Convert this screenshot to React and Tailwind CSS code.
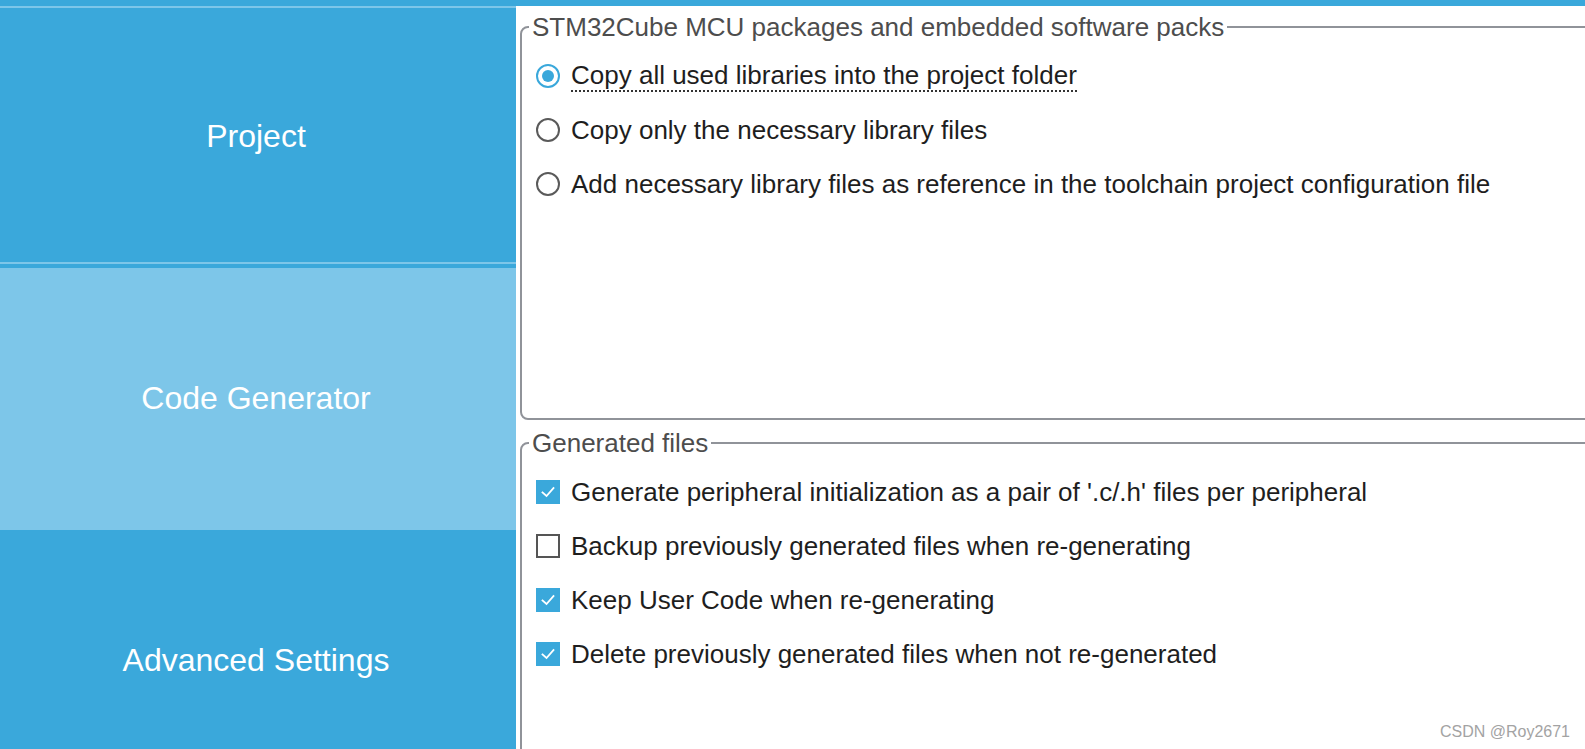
import React from "react";

const font = { fontFamily: '"Liberation Sans", Arial, sans-serif' };

function Radio({ checked }) {
  if (checked) {
    return (
      <span className="flex h-[24px] w-[24px] shrink-0 items-center justify-center rounded-full border-2 border-[#3aa8db] bg-white">
        <span className="h-[12px] w-[12px] rounded-full bg-[#3aa8db]" />
      </span>
    );
  }
  return <span className="h-[24px] w-[24px] shrink-0 rounded-full border-2 border-[#5a5a5a] bg-white" />;
}

function Check({ checked }) {
  if (checked) {
    return (
      <span className="flex h-[24px] w-[24px] shrink-0 items-center justify-center bg-[#3aa8db]">
        <svg width="16" height="16" viewBox="0 0 16 16" fill="none">
          <path d="M2.5 8.5 L6.5 12 L13.5 4" stroke="white" strokeWidth="1.8" strokeLinecap="square" />
        </svg>
      </span>
    );
  }
  return <span className="h-[24px] w-[24px] shrink-0 border-2 border-[#555555] bg-white" />;
}

function Row({ control, label, underline }) {
  return (
    <div className="flex h-[54px] items-center pl-[14px]">
      {control}
      <span
        className={
          "ml-[11px] text-[26px] leading-[30px] text-[#1e1e1e] whitespace-nowrap" +
          (underline ? " border-b-2 border-dotted border-[#333333]" : "")
        }
      >
        {label}
      </span>
    </div>
  );
}

export default function App() {
  return (
    <div className="relative flex h-[749px] w-[1585px] flex-col overflow-hidden bg-white" style={font}>
      <div className="h-[6px] w-full shrink-0 bg-[#3aa8db]" />
      <div className="flex flex-1">
        {/* Sidebar */}
        <div className="flex w-[516px] shrink-0 flex-col border-t-2 border-[#7dc6e9] bg-[#3aa8db]">
          <div className="flex h-[254px] shrink-0 items-center justify-center text-[32px] text-white">
            <span className="mt-[2px] -ml-[4px]">Project</span>
          </div>
          <div className="h-[2px] shrink-0 bg-[#7dc6e9]" />
          <div className="h-[4px] shrink-0 bg-[#3aa8db]" />
          <div className="flex h-[262px] shrink-0 items-center justify-center bg-[#7dc6e9] text-[32px] text-white">
            <span className="-mt-[2px] -ml-[4px]">Code Generator</span>
          </div>
          <div className="flex h-[262px] shrink-0 items-center justify-center text-[32px] text-white">
            <span className="-mt-[2px] -ml-[4px]">Advanced Settings</span>
          </div>
        </div>
        {/* Main */}
        <div className="ml-[4px] flex w-[1200px] shrink-0 flex-col pt-[6px]">
          <fieldset className="h-[408px] rounded-lg border-2 border-[#909399]">
            <legend className="ml-[7px] px-[3px] text-[26px] leading-[30px] text-[#4d4d4d]">
              STM32Cube MCU packages and embedded software packs
            </legend>
            <div className="pt-[7px]">
              <Row control={<Radio checked />} label="Copy all used libraries into the project folder" underline />
              <Row control={<Radio />} label="Copy only the necessary library files" />
              <Row control={<Radio />} label="Add necessary library files as reference in the toolchain project configuration file" />
            </div>
          </fieldset>
          <fieldset className="mt-[8px] h-[400px] rounded-lg border-2 border-[#909399]">
            <legend className="ml-[7px] px-[3px] text-[26px] leading-[30px] text-[#4d4d4d]">Generated files</legend>
            <div className="pt-[7px]">
              <Row control={<Check checked />} label="Generate peripheral initialization as a pair of '.c/.h' files per peripheral" />
              <Row control={<Check />} label="Backup previously generated files when re-generating" />
              <Row control={<Check checked />} label="Keep User Code when re-generating" />
              <Row control={<Check checked />} label="Delete previously generated files when not re-generated" />
            </div>
          </fieldset>
        </div>
      </div>
      <div className="absolute bottom-[5px] right-[15px] text-[16px] text-[#a3a3a3]">CSDN @Roy2671</div>
    </div>
  );
}
